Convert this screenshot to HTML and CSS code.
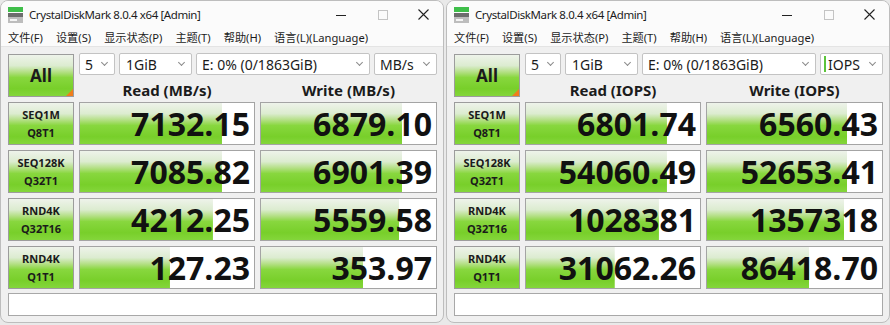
FILE: index.html
```html
<!DOCTYPE html>
<html lang="zh-CN">
<head>
    <meta charset="UTF-8">
    <title>CrystalDiskMark 8.0.4 x64 [Admin]</title>
    <link rel="stylesheet" href="styles.css">
</head>
<body>
<div class="desk">

    <!-- 窗口 1：MB/s -->
    <div class="win">
        <div class="titlebar">
            <svg class="appicon" width="15" height="16" viewBox="0 0 15 16">
                <rect x="0" y="0" width="15" height="5" fill="#3fbf4a"/>
                <rect x="0" y="6" width="15" height="4" fill="#6d6d6d"/>
                <rect x="0" y="10" width="15" height="6" fill="#bdbdbd"/>
                <rect x="2" y="12" width="7" height="2" fill="#f4f4f4"/>
            </svg>
            <span class="title">CrystalDiskMark 8.0.4 x64 [Admin]</span>
            <div class="caps">
                <span class="cap cap-min"><svg width="10" height="10" viewBox="0 0 10 10"><path d="M0 5.5h10" stroke="#222" stroke-width="1"/></svg></span>
                <span class="cap cap-max"><svg width="10" height="10" viewBox="0 0 10 10"><rect x="0.5" y="0.5" width="9" height="9" fill="none" stroke="#c4c4c4" stroke-width="1"/></svg></span>
                <span class="cap cap-close"><svg width="11" height="11" viewBox="0 0 11 11"><path d="M0.5 0.5l10 10M10.5 0.5l-10 10" stroke="#222" stroke-width="1.1"/></svg></span>
            </div>
        </div>
        <div class="menubar">
            <span>文件(F)</span>
            <span>设置(S)</span>
            <span>显示状态(P)</span>
            <span>主题(T)</span>
            <span>帮助(H)</span>
            <span>语言(L)(Language)</span>
        </div>
        <div class="panel">
            <div class="btn-all">All</div>
            <div class="top">
                <div class="opts">
                    <div class="combo c-count"><span>5</span><i class="chev"></i></div>
                    <div class="combo c-size"><span>1GiB</span><i class="chev"></i></div>
                    <div class="combo c-drive"><span>E: 0% (0/1863GiB)</span><i class="chev"></i></div>
                    <div class="combo c-unit"><span>MB/s</span><i class="chev"></i></div>
                </div>
                <div class="heads">
                    <div class="head">Read (MB/s)</div>
                    <div class="head">Write (MB/s)</div>
                </div>
            </div>

            <div class="label">SEQ1M<br>Q8T1</div>
            <div class="val" style="--w:81.6%">7132.15</div>
            <div class="val" style="--w:80.6%">6879.10</div>

            <div class="label">SEQ128K<br>Q32T1</div>
            <div class="val" style="--w:81.6%">7085.82</div>
            <div class="val" style="--w:80.6%">6901.39</div>

            <div class="label">RND4K<br>Q32T16</div>
            <div class="val" style="--w:76.4%">4212.25</div>
            <div class="val" style="--w:78.9%">5559.58</div>

            <div class="label">RND4K<br>Q1T1</div>
            <div class="val" style="--w:51.7%">127.23</div>
            <div class="val" style="--w:58.3%">353.97</div>

            <div class="comment"></div>
        </div>
    </div>

    <!-- 窗口 2：IOPS -->
    <div class="win">
        <div class="titlebar">
            <svg class="appicon" width="15" height="16" viewBox="0 0 15 16">
                <rect x="0" y="0" width="15" height="5" fill="#3fbf4a"/>
                <rect x="0" y="6" width="15" height="4" fill="#6d6d6d"/>
                <rect x="0" y="10" width="15" height="6" fill="#bdbdbd"/>
                <rect x="2" y="12" width="7" height="2" fill="#f4f4f4"/>
            </svg>
            <span class="title">CrystalDiskMark 8.0.4 x64 [Admin]</span>
            <div class="caps">
                <span class="cap cap-min"><svg width="10" height="10" viewBox="0 0 10 10"><path d="M0 5.5h10" stroke="#222" stroke-width="1"/></svg></span>
                <span class="cap cap-max"><svg width="10" height="10" viewBox="0 0 10 10"><rect x="0.5" y="0.5" width="9" height="9" fill="none" stroke="#c4c4c4" stroke-width="1"/></svg></span>
                <span class="cap cap-close"><svg width="11" height="11" viewBox="0 0 11 11"><path d="M0.5 0.5l10 10M10.5 0.5l-10 10" stroke="#222" stroke-width="1.1"/></svg></span>
            </div>
        </div>
        <div class="menubar">
            <span>文件(F)</span>
            <span>设置(S)</span>
            <span>显示状态(P)</span>
            <span>主题(T)</span>
            <span>帮助(H)</span>
            <span>语言(L)(Language)</span>
        </div>
        <div class="panel">
            <div class="btn-all">All</div>
            <div class="top">
                <div class="opts">
                    <div class="combo c-count"><span>5</span><i class="chev"></i></div>
                    <div class="combo c-size"><span>1GiB</span><i class="chev"></i></div>
                    <div class="combo c-drive"><span>E: 0% (0/1863GiB)</span><i class="chev"></i></div>
                    <div class="combo c-unit focus"><span><b class="caret"></b>IOPS</span><i class="chev"></i></div>
                </div>
                <div class="heads">
                    <div class="head">Read (IOPS)</div>
                    <div class="head">Write (IOPS)</div>
                </div>
            </div>

            <div class="label">SEQ1M<br>Q8T1</div>
            <div class="val" style="--w:81%">6801.74</div>
            <div class="val" style="--w:80%">6560.43</div>

            <div class="label">SEQ128K<br>Q32T1</div>
            <div class="val" style="--w:81%">54060.49</div>
            <div class="val" style="--w:80%">52653.41</div>

            <div class="label">RND4K<br>Q32T16</div>
            <div class="val" style="--w:76.4%">1028381</div>
            <div class="val" style="--w:78.3%">1357318</div>

            <div class="label">RND4K<br>Q1T1</div>
            <div class="val" style="--w:51%">31062.26</div>
            <div class="val" style="--w:58.3%">86418.70</div>

            <div class="comment"></div>
        </div>
    </div>

</div>
</body>
</html>
```

FILE: styles.css
```css
* {
    box-sizing: border-box;
}

html, body {
    margin: 0;
    padding: 0;
}

body {
    width: 890px;
    height: 325px;
    overflow: hidden;
    background: #e9e9e9;
    font-family: "Noto Sans", "Noto Sans CJK SC", sans-serif;
    color: #1b1b1b;
}

.desk {
    display: flex;
    gap: 2px;
}

/* 窗口外框 */
.win {
    width: 444px;
    height: 323px;
    border: 1px solid #bdbdbd;
    border-radius: 8px;
    background: #f0f0f0;
    overflow: hidden;
    display: flex;
    flex-direction: column;
}

.titlebar {
    height: 27px;
    background: #fbfbfb;
    display: flex;
    align-items: center;
    padding-left: 7px;
}

.appicon {
    display: block;
    margin-top: 1px;
}

.title {
    margin-left: 6px;
    font-size: 11.5px;
    letter-spacing: -0.4px;
}

.caps {
    margin-left: auto;
    display: flex;
    height: 100%;
}

.cap {
    width: 42px;
    display: flex;
    align-items: center;
    justify-content: center;
}

.cap-close {
    width: 39px;
}

.cap svg {
    display: block;
}

.menubar {
    height: 19px;
    background: #fbfbfb;
    display: flex;
    align-items: center;
    gap: 13px;
    padding-left: 7px;
    font-size: 11.2px;
    border-bottom: 1px solid #e4e4e4;
}

/* 主面板 */
.panel {
    flex: 1;
    display: grid;
    grid-template-columns: 66px 176px 177px;
    grid-template-rows: 44px repeat(4, 43px) 22px;
    column-gap: 5px;
    row-gap: 5px;
    padding: 6px 0 0 7px;
}

.btn-all,
.label {
    border: 1px solid #9c9c9c;
    background: linear-gradient(180deg, #eef3ea 0%, #dcecd0 26%, #b2df82 42%, #88d73e 55%, #78cf2a 82%, #84d63b 100%);
    font-weight: bold;
    display: flex;
    align-items: center;
    justify-content: center;
    text-align: center;
}

.btn-all {
    position: relative;
    margin-top: 1px;
    font-size: 17px;
}

.btn-all::after {
    content: "";
    position: absolute;
    right: 0;
    bottom: 0;
    border-style: solid;
    border-width: 0 0 7px 7px;
    border-color: transparent transparent #f07d1c transparent;
}

.label {
    font-size: 11px;
    line-height: 18px;
}

.top {
    grid-column: 2 / 4;
    display: flex;
    flex-direction: column;
}

.opts {
    display: flex;
    gap: 4px;
    height: 22px;
}

.combo {
    height: 22px;
    border: 1px solid #c3c3c3;
    border-radius: 2px;
    background: #fff;
    display: flex;
    align-items: center;
    justify-content: space-between;
    padding: 0 7px 0 5px;
    font-size: 14px;
}

.c-count { width: 36px; }
.c-size { width: 73px; padding-left: 6px; }
.c-drive { width: 174px; }
.c-unit { width: 63px; }

.chev {
    width: 5px;
    height: 5px;
    border-right: 1px solid #8a8a8a;
    border-bottom: 1px solid #8a8a8a;
    transform: rotate(45deg);
    margin-top: -3px;
}

.focus span {
    display: flex;
    align-items: center;
}

.caret {
    width: 2px;
    height: 16px;
    background: #5cc43a;
    margin: 0 2px 0 -2px;
}

.heads {
    display: grid;
    grid-template-columns: 176px 177px;
    column-gap: 5px;
    flex: 1;
}

.head {
    font-size: 15px;
    font-weight: bold;
    text-align: center;
    line-height: 18px;
    padding-top: 6px;
}

/* 数值格，绿色条宽度由 --w 决定 */
.val {
    border: 1px solid #a4a4a4;
    background: linear-gradient(180deg, #eef3ea 0%, #dcecd0 26%, #b2df82 42%, #88d73e 55%, #78cf2a 82%, #84d63b 100%) no-repeat left top / var(--w) 100%, #fff;
    display: flex;
    align-items: center;
    justify-content: flex-end;
    padding-right: 4px;
    font-family: "Open Sans", "Noto Sans", sans-serif;
    font-weight: bold;
    font-size: 32px;
    color: #111;
}

.comment {
    grid-column: 1 / 4;
    margin-top: -1px;
    border: 1px solid #a8a8a8;
    background: #fff;
}
```
